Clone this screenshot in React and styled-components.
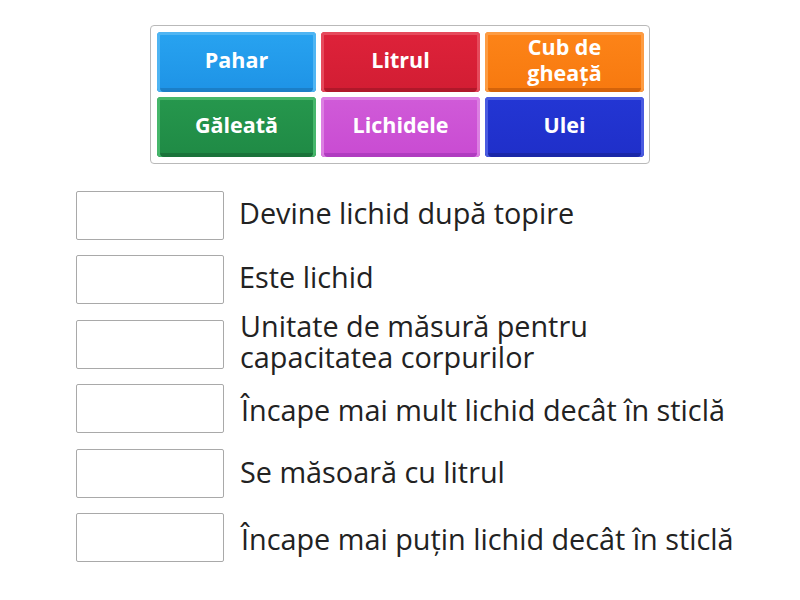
import React from 'react';
import styled, { createGlobalStyle } from 'styled-components';

const GlobalStyle = createGlobalStyle`
	body {
		margin: 0;
		background: #fff;
		font-family: 'Open Sans', 'Liberation Sans', sans-serif;
	}
`;

const Page = styled.div`
	width: 800px;
	height: 600px;
	padding-top: 25px;
	box-sizing: border-box;
`;

const Bank = styled.div`
	width: 500px;
	margin: 0 auto;
	box-sizing: border-box;
	border: 1px solid #b9b9b9;
	border-radius: 4px;
	padding: 6px;
	display: grid;
	grid-template-columns: repeat(3, 159px);
	grid-auto-rows: 60px;
	column-gap: 5px;
	row-gap: 5px;
`;

const Tile = styled.div`
	display: flex;
	align-items: center;
	justify-content: center;
	text-align: center;
	border-radius: 4px;
	background: linear-gradient(${p => p.$top}, ${p => p.$bottom});
	box-shadow: inset 0 3px 0 ${p => p.$light}, inset 3px 0 0 ${p => p.$light},
		inset -3px 0 0 ${p => p.$light}, inset 0 -4px 0 ${p => p.$dark};
	color: #fff;
	font-weight: 700;
	font-size: 21.5px;
	line-height: 26px;
	padding: 0 16px 4px;
	white-space: pre-line;
`;

const List = styled.div`
	margin: 27px 0 0 76px;
	display: flex;
	flex-direction: column;
	gap: 15.4px;
`;

const Row = styled.div`
	display: flex;
	align-items: center;
	height: 49px;
	gap: 15px;
`;

const Slot = styled.div`
	flex: none;
	width: 148px;
	height: 49px;
	box-sizing: border-box;
	border: 1px solid #a9a9a9;
	border-radius: 2px;
	background: #fff;
`;

const Clue = styled.div`
	font-size: 28.8px;
	line-height: 31px;
	color: #222;
	white-space: pre-line;
	position: relative;
	top: ${p => p.$shift}px;
	padding-left: ${p => p.$indent}px;
`;

const tiles = [
	{ text: 'Pahar', top: '#28a3f0', bottom: '#1e93e6', light: '#4fb5f3', dark: '#1b7fc8' },
	{ text: 'Litrul', top: '#de223a', bottom: '#d21d33', light: '#e64a5c', dark: '#b0182a' },
	{ text: 'Cub de\ngheață', top: '#fd8418', bottom: '#f7790f', light: '#fd9c43', dark: '#d4630a' },
	{ text: 'Găleată', top: '#26974d', bottom: '#1f8a45', light: '#46b76b', dark: '#1a733a' },
	{ text: 'Lichidele', top: '#d05bd8', bottom: '#c94bd2', light: '#dc7fe2', dark: '#b03cc0' },
	{ text: 'Ulei', top: '#2336d4', bottom: '#1f2fc9', light: '#4a5be0', dark: '#1a27a8' },
];

const clues = [
	{ text: 'Devine lichid după topire', shift: -3.5, indent: 0 },
	{ text: 'Este lichid', shift: -3, indent: 0 },
	{ text: 'Unitate de măsură pentru\ncapacitatea corpurilor', shift: -3, indent: 1 },
	{ text: 'Încape mai mult lichid decât în sticlă', shift: 1, indent: 2 },
	{ text: 'Se măsoară cu litrul', shift: -1.5, indent: 1 },
	{ text: 'Încape mai puțin lichid decât în sticlă', shift: 1.5, indent: 2 },
];

export default function App() {
	return (
		<Page>
			<GlobalStyle />
			<Bank>
				{tiles.map(t => (
					<Tile key={t.text} $top={t.top} $bottom={t.bottom} $light={t.light} $dark={t.dark}>
						{t.text}
					</Tile>
				))}
			</Bank>
			<List>
				{clues.map(c => (
					<Row key={c.text}>
						<Slot />
						<Clue $shift={c.shift} $indent={c.indent}>{c.text}</Clue>
					</Row>
				))}
			</List>
		</Page>
	);
}
